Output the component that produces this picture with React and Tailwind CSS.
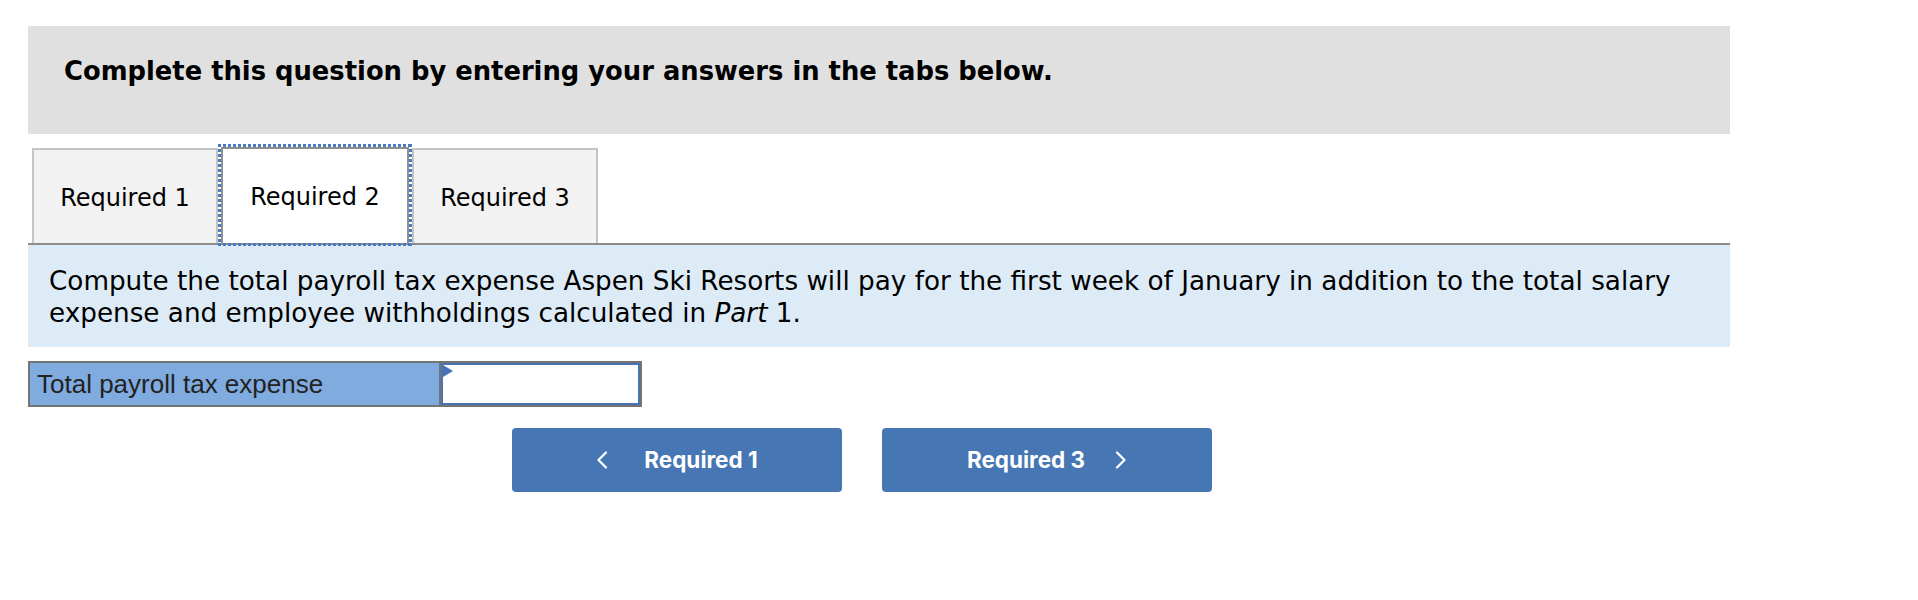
import React from 'react';

const dotted =
  '[background:linear-gradient(90deg,#4a7bc1_60%,transparent_60%)_0_0/5px_3px_repeat-x,linear-gradient(90deg,#4a7bc1_60%,transparent_60%)_0_100%/5px_3px_repeat-x,linear-gradient(#4a7bc1_60%,transparent_60%)_0_0/3px_5px_repeat-y,linear-gradient(#4a7bc1_60%,transparent_60%)_100%_0/3px_5px_repeat-y]';

function Pestana({ texto, activa }) {
  if (activa) {
    return (
      <div className={`relative z-10 -mb-[3px] p-[3px] w-[194px] h-[102px] ${dotted}`}>
        <div className="h-full border-2 border-b-0 border-[#8f8f8f] bg-white flex items-center justify-center pt-[2px]">
          {texto}
        </div>
      </div>
    );
  }
  return (
    <div className="w-[186px] h-[95px] border-2 border-b-0 border-[#c4c4c4] bg-[#f2f2f2] flex items-center justify-center pt-[2px]">
      {texto}
    </div>
  );
}

function Chevron({ dir }) {
  return (
    <svg width="12" height="18" viewBox="0 0 12 18" fill="none" stroke="white" strokeWidth="2.2" strokeLinecap="round" strokeLinejoin="round">
      {dir === 'left' ? <polyline points="10,1.5 2.5,9 10,16.5" /> : <polyline points="2,1.5 9.5,9 2,16.5" />}
    </svg>
  );
}

export default function App() {
  return (
    <div className="w-[1918px] h-[600px] bg-white font-['DejaVu_Sans',sans-serif] text-black">
      <div className="ml-[28px] pt-[26px] w-[1702px]">
        <div className="h-[108px] bg-[#e0e0e0] pl-[36px] pt-[30px]">
          <h2 className="text-[25.8px] leading-[30px] font-bold">
            Complete this question by entering your answers in the tabs below.
          </h2>
        </div>

        <div className="mt-[10px] pl-[4px] flex items-end text-[24px]">
          <Pestana texto="Required 1" />
          <Pestana texto="Required 2" activa />
          <Pestana texto="Required 3" />
        </div>

        <div className="border-t-2 border-[#8c8c8c] bg-[#ddebf7] h-[104px] pl-[21px] pr-[24px] pt-[20px] text-[26.25px] leading-[32px]">
          <p>
            Compute the total payroll tax expense Aspen Ski Resorts will pay for the first week of January in addition to the total salary
            expense and employee withholdings calculated in <i>Part</i> 1.
          </p>
        </div>

        <div className="mt-[14px] w-[614px] h-[46px] border-2 border-[#747474] flex">
          <div className="w-[411px] bg-[#80abdf] border-r-2 border-[#747474] flex items-center pl-[7px] font-['Liberation_Sans',sans-serif] text-[26px] text-[#222]">
            Total payroll tax expense
          </div>
          <div className="relative flex-1 border-2 border-[#4674b4] bg-white">
            <span className="absolute left-0 top-0 w-0 h-0 border-y-[6px] border-y-transparent border-l-[10px] border-l-[#4674b4]" />
          </div>
        </div>

        <div className="mt-[21px] ml-[484px] flex gap-[40px] font-['Inter',sans-serif] text-[22.5px] font-bold text-white">
          <button className="w-[330px] h-[64px] rounded-[4px] bg-[#4676b4] flex items-center justify-center gap-[36px]">
            <Chevron dir="left" />
            <span>Required 1</span>
          </button>
          <button className="w-[330px] h-[64px] rounded-[4px] bg-[#4676b4] flex items-center justify-center gap-[30px]">
            <span>Required 3</span>
            <Chevron dir="right" />
          </button>
        </div>
      </div>
    </div>
  );
}
